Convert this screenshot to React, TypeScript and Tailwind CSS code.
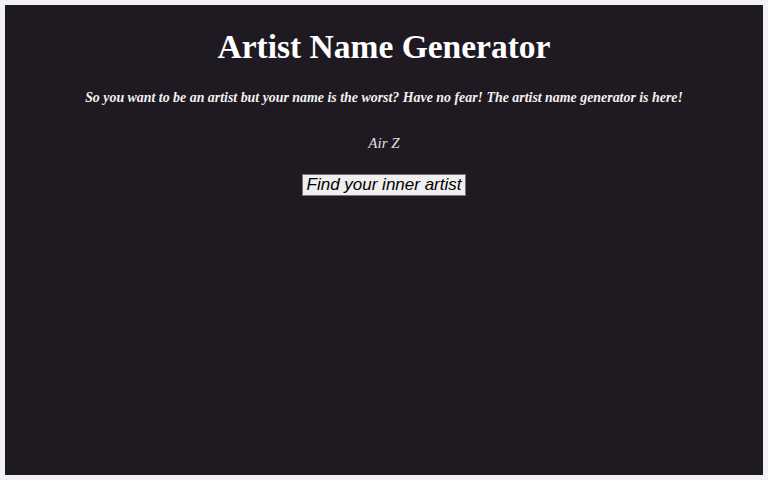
export default function App(): JSX.Element {
  return (
    <div className="w-[768px] h-[480px] bg-[#f3f2f5] p-[5px]">
      <div className="h-[470px] bg-[#1f1a21] flex flex-col items-center text-white font-['Liberation_Serif',serif]">
        <h1 className="mt-[22px] text-[33.5px] leading-[40px] font-bold">Artist Name Generator</h1>
        <p className="mt-[23px] text-[13.9px] leading-[16px] font-bold italic text-[#f2f2f2]">
          So you want to be an artist but your name is the worst? Have no fear! The artist name generator is here!
        </p>
        <p className="mt-[28px] text-[15px] leading-[18px] italic text-[#e0e0e0]">Air Z</p>
        <button className="mt-[22px] h-[22px] px-[4px] bg-[#efefef] border border-[#767676] text-black italic text-[17px] leading-[20px] font-['Liberation_Sans',sans-serif]">
          Find your inner artist
        </button>
      </div>
    </div>
  );
}
